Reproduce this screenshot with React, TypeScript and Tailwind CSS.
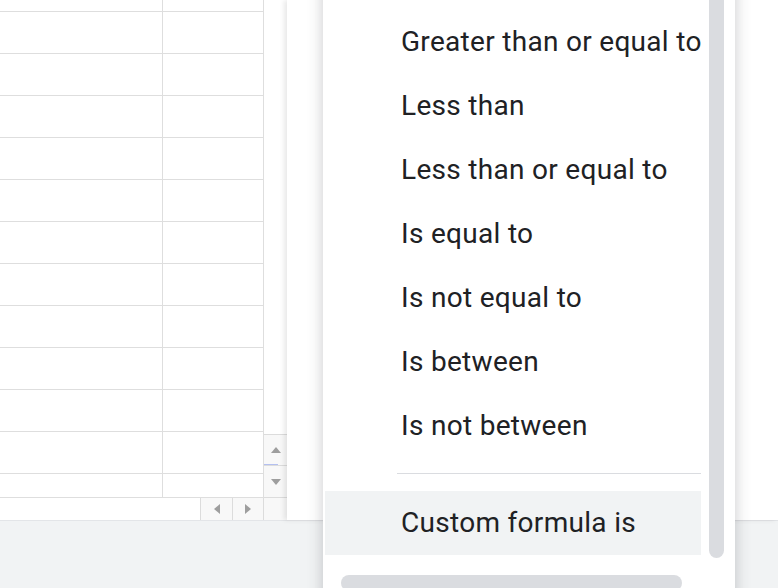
const items = [
  "Greater than or equal to",
  "Less than",
  "Less than or equal to",
  "Is equal to",
  "Is not equal to",
  "Is between",
  "Is not between",
];

const Tri = ({ dir }: { dir: "up" | "down" | "left" | "right" }) => {
  const pts = {
    up: "0,6 5,0 10,6",
    down: "0,0 10,0 5,6",
    left: "6,0 6,10 0,5",
    right: "0,0 0,10 6,5",
  }[dir];
  const vertical = dir === "up" || dir === "down";
  return (
    <svg width={vertical ? 10 : 6} height={vertical ? 6 : 10} viewBox={vertical ? "0 0 10 6" : "0 0 6 10"}>
      <polygon points={pts} fill="#9e9e9e" />
    </svg>
  );
};

const Grid = () => {
  const rows = [12, ...Array(11).fill(42), 24];
  return (
    <div className="flex flex-col w-[264px] shrink-0">
      {rows.map((h, i) => (
        <div key={i} className="flex border-b border-[#dedede]" style={{ height: h }}>
          <div className="w-[163px] border-r border-[#dedede]" />
          <div className="w-[101px] border-r border-[#dedede]" />
        </div>
      ))}
      {/* horizontal scroll */}
      <div className="flex h-[22px]">
        <div className="w-[200px] bg-white" />
        <div className="w-[32px] border-l border-[#dcdcdc] bg-[#f8f8f8] flex items-center justify-center">
          <Tri dir="left" />
        </div>
        <div className="w-[32px] border-l border-r border-[#dcdcdc] bg-[#f8f8f8] flex items-center justify-center">
          <Tri dir="right" />
        </div>
      </div>
    </div>
  );
};

const VScroll = () => (
  <div className="flex flex-col w-[23px] shrink-0">
    <div className="h-[434px] bg-white" />
    <div className="relative h-[31px] border-t border-[#dcdcdc] bg-[#f8f8f8] flex items-center justify-center">
      <Tri dir="up" />
      <div className="absolute left-0 bottom-0 w-[14px] h-px bg-[#b4c0f0]" />
    </div>
    <div className="h-[32px] border-t border-[#dcdcdc] bg-[#f8f8f8] flex items-center justify-center">
      <Tri dir="down" />
    </div>
    <div className="h-[23px] border-t border-[#dcdcdc] bg-[#f8f8f8]" />
  </div>
);

const Menu = () => (
  <div className="absolute z-20 left-[323px] top-[-20px] w-[412px] h-[640px] bg-white shadow-[0_2px_14px_rgba(60,64,67,0.28)] flex flex-col">
    <div className="flex">
      <div className="ml-[2px] w-[376px] shrink-0 pt-[30px]">
        {items.map((t) => (
          <div key={t} className="h-[64px] pl-[76px] flex items-center whitespace-nowrap text-[28px] tracking-[0.3px] text-[#202124]">
            {t}
          </div>
        ))}
        <div className="mt-[15px] ml-[72px] h-px bg-[#dadce0]" />
        <div className="mt-[17px] h-[64px] pl-[76px] flex items-center whitespace-nowrap bg-[#f1f3f4] text-[28px] tracking-[0.3px] text-[#202124]">
          Custom formula is
        </div>
      </div>
      <div className="ml-[8px] w-[15px] shrink-0 h-[578px] rounded-b-full bg-[#dadce0]" />
    </div>
    <div className="mt-[17px] ml-[18px] w-[341px] h-[16px] rounded-full bg-[#dadce0]" />
  </div>
);

export default function App() {
  return (
    <div className="relative w-[778px] h-[588px] overflow-hidden bg-white font-['Roboto',sans-serif]">
      <div className="flex h-[520px]">
        <Grid />
        <VScroll />
        <div className="relative z-10 flex-1 bg-white shadow-[-3px_0_5px_rgba(0,0,0,0.09)]" />
      </div>
      <div className="h-[68px] bg-[#f1f3f4] border-t border-[#e3e5e8]" />
      <Menu />
    </div>
  );
}
